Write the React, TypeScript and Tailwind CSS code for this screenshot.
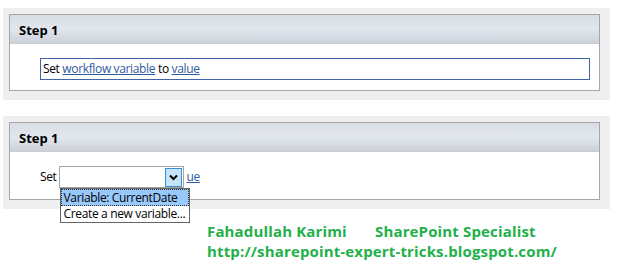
const font = { fontFamily: '"Open Sans", "Noto Sans", sans-serif' };

function StepHeader() {
  return (
    <div className="h-[29px] border-b border-[#c9ccd3] bg-gradient-to-b from-[#d9dde5] via-[#e2e6ed] to-[#cdd1da] pl-[9px] pt-[6px] text-[13px] font-bold leading-[18px] text-black">
      Step 1
    </div>
  );
}

export default function App() {
  return (
    <div className="h-[269px] w-[627px] bg-white" style={font}>
      {/* first panel */}
      <div className="ml-[3px] mt-[8px] h-[92px] w-[607px] bg-[#efefef] pl-[6px] pt-[6px]">
        <div className="h-[77px] w-[591px] border border-[#a6a6a6] bg-white">
          <StepHeader />
          <div className="pl-[30px] pt-[14px]">
            <div className="h-[22px] w-[550px] border border-[#3f62a8] pl-[2px] text-[12px] leading-[20px] tracking-[-0.35px] text-black">
              Set <span className="text-[#2f5a9e] underline">workflow variable</span> to{' '}
              <span className="text-[#2f5a9e] underline">value</span>
            </div>
          </div>
        </div>
      </div>

      {/* second panel */}
      <div className="relative ml-[3px] mt-[16px] h-[93px] w-[607px] bg-[#efefef] pl-[6px] pt-[6px]">
        <div className="h-[78px] w-[591px] border border-[#a6a6a6] bg-white">
          <StepHeader />
          <div className="flex items-center pl-[30px] pt-[14px] text-[12px] tracking-[-0.35px] text-black">
            <span className="mr-[2px]">Set</span>
            <div className="relative flex h-[22px] w-[125px] items-center justify-end border border-[#a5a5a5] pr-[1px]">
              <div className="flex h-[19px] w-[17px] items-center justify-center border border-[#3b8fd0] bg-[#c5e4fa]">
                <svg width="9" height="7" viewBox="0 0 9 7">
                  <path d="M1 1.5 L4.5 5 L8 1.5" stroke="#000" strokeWidth="2" fill="none" />
                </svg>
              </div>
              <div className="absolute left-[0px] top-[21px] z-10 w-[130px] border border-[#646464] bg-white leading-[15px]">
                <div className="border border-dotted border-[#333] bg-[#99c8fb] pl-[2px]">Variable: CurrentDate</div>
                <div className="pl-[3px] pb-[1px]">Create a new variable...</div>
              </div>
            </div>
            <span className="ml-[3px] text-[#2f5a9e] underline">ue</span>
          </div>
        </div>
      </div>

      {/* credits */}
      <div className="ml-[207px] mt-[12px] text-[15px] font-bold leading-[20px] tracking-[0.15px] text-[#1fb04a]">
        <div className="flex">
          <span className="w-[168px]">Fahadullah Karimi</span>
          <span>SharePoint Specialist</span>
        </div>
        <div>http://sharepoint-expert-tricks.blogspot.com/</div>
      </div>
    </div>
  );
}
